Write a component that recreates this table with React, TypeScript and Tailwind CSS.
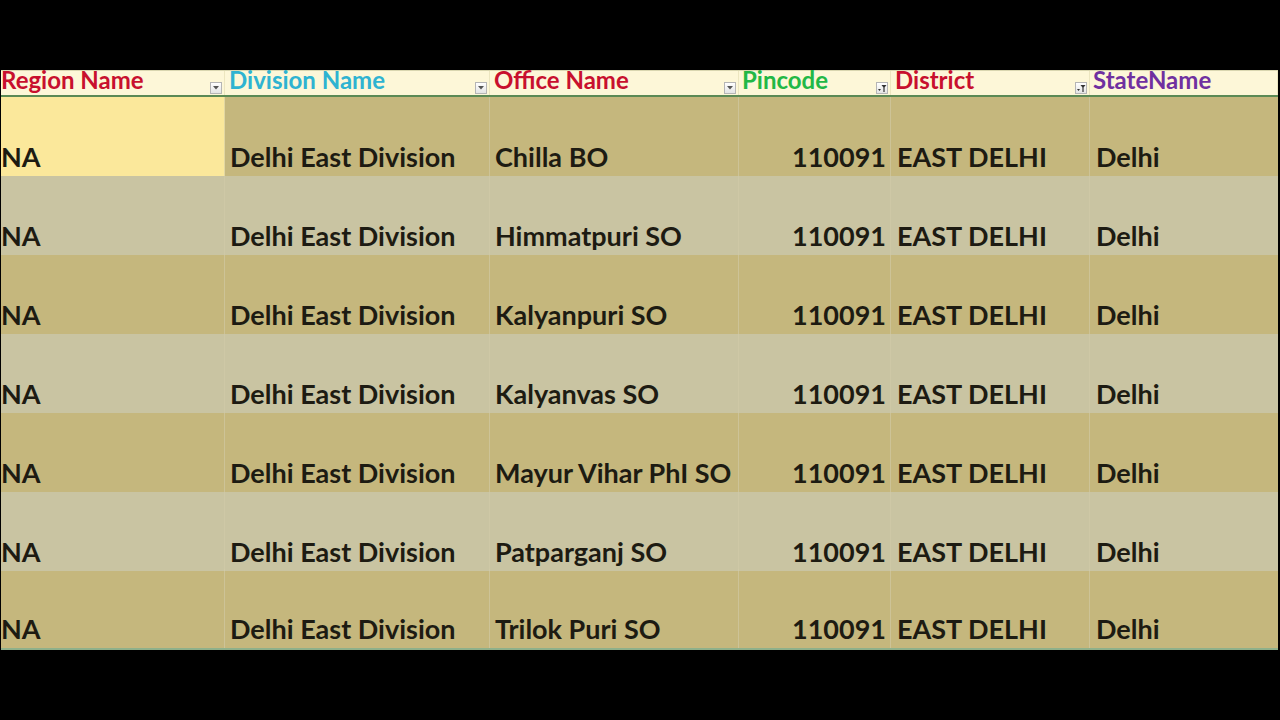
const cols = [
  { name: 'Region Name', color: 'text-[#c8102e]', w: 'w-[224px]', pad: 'left-0', btn: 'drop' },
  { name: 'Division Name', color: 'text-[#2fb3d1]', w: 'w-[265px]', pad: 'left-[4px]', btn: 'drop' },
  { name: 'Office Name', color: 'text-[#c8102e]', w: 'w-[249px]', pad: 'left-[4px]', btn: 'drop' },
  { name: 'Pincode', color: 'text-[#22b846]', w: 'w-[152px]', pad: 'left-[3px]', btn: 'filter' },
  { name: 'District', color: 'text-[#c8102e]', w: 'w-[199px]', pad: 'left-[4px]', btn: 'filter' },
  { name: 'StateName', color: 'text-[#7030a0]', w: 'flex-1', pad: 'left-[3px]', btn: 'none' },
];

const offices = [
  'Chilla BO',
  'Himmatpuri SO',
  'Kalyanpuri SO',
  'Kalyanvas SO',
  'Mayur Vihar PhI SO',
  'Patparganj SO',
  'Trilok Puri SO',
];

function FilterButton({ kind }: { kind: string }) {
  if (kind === 'none') return null;
  return (
    <span className="absolute bottom-[1px] right-[2px] flex h-[12px] w-[12px] items-center justify-center border border-[#b5b5b5] bg-gradient-to-b from-white to-[#e4e4e4]">
      {kind === 'drop' ? (
        <svg width="6" height="4" viewBox="0 0 6 4">
          <path d="M0 0h6L3 3.5z" fill="#555" />
        </svg>
      ) : (
        <svg width="9" height="7" viewBox="0 0 9 7">
          <path d="M0 4h3L1.5 6z" fill="#333" />
          <path d="M3.5 0h5L6.6 2.5V7H5.4V2.5z" fill="#333" />
        </svg>
      )}
    </span>
  );
}

export default function App() {
  return (
    <div
      className="h-[720px] w-[1280px] overflow-hidden bg-black pt-[70px]"
      style={{ fontFamily: 'Lato, "Open Sans", sans-serif' }}
    >
      <div className="ml-[1px] w-[1277px]">
        <div className="flex h-[27px] border-t border-b-2 border-t-[#d9d6b0] border-b-[#5b8a55] bg-[#fdf7d8]">
          {cols.map((c) => (
            <div key={c.name} className={`relative ${c.w} border-r border-[#ece6c0]`}>
              <span className={`absolute bottom-[3px] ${c.pad} text-[24px] font-bold leading-none ${c.color}`}>
                {c.name}
              </span>
              <FilterButton kind={c.btn} />
            </div>
          ))}
        </div>
        {offices.map((o, i) => (
          <div
            key={o}
            className={`flex h-[79px] items-end pb-[6px] text-[27px] font-bold leading-none text-[#1d1b12] ${
              i % 2 === 0 ? 'bg-[#c5b77d]' : 'bg-[#c9c4a2]'
            } ${i === offices.length - 1 ? 'border-b-2 border-[#8fb08a]' : ''}`}
          >
            <div
              className={`-mb-[6px] flex h-[79px] w-[224px] items-end border-r border-[#d2cca8]/60 pb-[6px] ${
                i === 0 ? 'bg-[#fbe89b]' : ''
              }`}
            >
              NA
            </div>
            <div className="-mb-[6px] flex h-[79px] w-[265px] items-end border-r border-[#d2cca8]/60 pb-[6px] pl-[5px]">
              Delhi East Division
            </div>
            <div className="-mb-[6px] flex h-[79px] w-[249px] items-end border-r border-[#d2cca8]/60 pb-[6px] pl-[5px]">
              {o}
            </div>
            <div className="-mb-[6px] flex h-[79px] w-[152px] items-end justify-end border-r border-[#d2cca8]/60 pb-[6px] pr-[4px]">
              110091
            </div>
            <div className="-mb-[6px] flex h-[79px] w-[199px] items-end border-r border-[#d2cca8]/60 pb-[6px] pl-[6px]">
              EAST DELHI
            </div>
            <div className="-mb-[6px] flex h-[79px] flex-1 items-end pb-[6px] pl-[6px]">Delhi</div>
          </div>
        ))}
      </div>
    </div>
  );
}
